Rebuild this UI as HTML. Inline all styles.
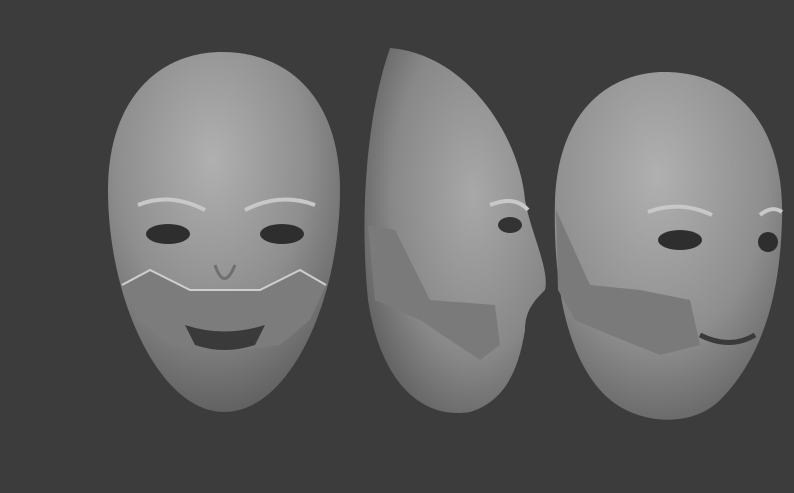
<!DOCTYPE html>
<html><head><style>html,body{margin:0;padding:0;background:#3c3c3c;}svg{display:block}</style></head>
<body>
<svg width="794" height="493" viewBox="0 0 794 493" xmlns="http://www.w3.org/2000/svg">
<defs>
<radialGradient id="g1" cx="0.45" cy="0.3" r="0.75">
<stop offset="0" stop-color="#b0b0b0"/><stop offset="0.55" stop-color="#8e8e8e"/><stop offset="1" stop-color="#5a5a5a"/></radialGradient>
<radialGradient id="g2" cx="0.6" cy="0.4" r="0.75">
<stop offset="0" stop-color="#a8a8a8"/><stop offset="0.6" stop-color="#888"/><stop offset="1" stop-color="#555"/></radialGradient>
<radialGradient id="g3" cx="0.45" cy="0.3" r="0.8">
<stop offset="0" stop-color="#b0b0b0"/><stop offset="0.6" stop-color="#8e8e8e"/><stop offset="1" stop-color="#5c5c5c"/></radialGradient>
</defs>
<rect width="794" height="493" fill="#3c3c3c"/>
<!-- front mask -->
<path d="M222 52 C290 52 340 100 340 190 C340 300 290 412 224 412 C160 412 108 300 108 190 C108 100 158 52 222 52Z" fill="url(#g1)"/>
<path d="M122 285 L150 270 L190 290 L260 290 L300 270 L326 285 L310 320 L280 345 L224 352 L170 345 L138 320Z" fill="#7c7c7c"/>
<path d="M122 285 L150 270 L190 290 L260 290 L300 270 L326 285" stroke="#cfcfcf" stroke-width="2" fill="none"/>
<path d="M185 325 Q224 338 265 325 L255 345 Q224 355 195 345Z" fill="#3a3a3a"/>
<ellipse cx="168" cy="234" rx="22" ry="10" fill="#2e2e2e"/>
<ellipse cx="282" cy="234" rx="22" ry="10" fill="#2e2e2e"/>
<path d="M138 205 Q170 192 205 210" stroke="#c8c8c8" stroke-width="4" fill="none"/>
<path d="M245 210 Q280 192 315 205" stroke="#c8c8c8" stroke-width="4" fill="none"/>
<path d="M215 265 Q224 292 235 265" stroke="#6f6f6f" stroke-width="3" fill="none"/>
<!-- side mask -->
<path d="M390 48 C470 55 520 140 525 200 C530 230 550 270 545 290 C535 300 525 310 525 330 C520 360 510 400 470 412 C420 420 380 380 368 300 C360 220 365 120 390 48Z" fill="url(#g2)"/>
<path d="M368 225 L395 230 L430 300 L495 305 L500 345 L480 360 L420 320 L375 300Z" fill="#7a7a7a"/>
<ellipse cx="510" cy="225" rx="12" ry="8" fill="#333"/>
<path d="M490 205 Q515 195 528 210" stroke="#c8c8c8" stroke-width="4" fill="none"/>
<!-- third mask -->
<path d="M660 72 C740 70 785 130 782 220 C780 300 760 360 720 400 C690 430 630 425 600 390 C565 350 553 280 555 200 C558 120 600 75 660 72Z" fill="url(#g3)"/>
<path d="M556 210 L590 285 L640 290 L690 300 L700 345 L660 355 L610 335 L575 320 L558 290Z" fill="#7a7a7a"/>
<ellipse cx="680" cy="240" rx="22" ry="10" fill="#2e2e2e"/>
<ellipse cx="768" cy="242" rx="10" ry="10" fill="#2e2e2e"/>
<path d="M648 212 Q680 200 712 215" stroke="#c8c8c8" stroke-width="4" fill="none"/>
<path d="M760 215 Q772 205 782 212" stroke="#c8c8c8" stroke-width="4" fill="none"/>
<path d="M700 335 Q730 350 755 335" stroke="#3a3a3a" stroke-width="5" fill="none"/>
</svg>
</body></html>
